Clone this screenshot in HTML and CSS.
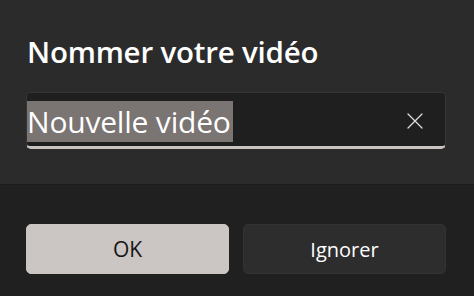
FILE: index.html
```html
<!DOCTYPE html>
<html lang="fr">

<head>
   <meta charset="UTF-8">
   <meta name="viewport" content="width=device-width, initial-scale=1.0">
   <title>Nommer votre vidéo</title>
   <link rel="stylesheet" href="styles.css">
</head>

<body>
   <div class="dialog">
      <div class="dialog-content">
         <h1 class="dialog-title">Nommer votre vidéo</h1>
         <div class="name-field">
            <span class="name-text"><span class="selected">Nouvelle vidéo</span></span>
            <button class="clear-button" aria-label="Effacer">
               <svg xmlns="http://www.w3.org/2000/svg" width="16" height="16" viewBox="0 0 16 16" fill="none" stroke="currentColor" stroke-width="1.3" stroke-linecap="round">
                  <path d="M1 1l14 14M15 1L1 15"/>
               </svg>
            </button>
         </div>
      </div>
      <div class="dialog-footer">
         <button class="dialog-button primary">OK</button>
         <button class="dialog-button">Ignorer</button>
      </div>
   </div>
</body>

</html>
```

FILE: styles.css
```css
body {
   margin: 0;
   background-color: #202020;
   font-family: "Open Sans", "Noto Sans", sans-serif;
   color: #ffffff;
}

.dialog {
   width: 474px;
   height: 296px;
   overflow: hidden;
}

.dialog-content {
   height: 185px;
   box-sizing: border-box;
   padding: 32px 28px 0 26px;
   background-color: #2b2b2b;
   border-bottom: 1px solid #1c1c1c;
}

.dialog-title {
   margin: 0 0 0 1px;
   font-size: 29.5px;
   font-weight: 600;
   line-height: 40px;
   letter-spacing: -0.2px;
}

.name-field {
   display: flex;
   align-items: center;
   height: 57px;
   margin-top: 20px;
   box-sizing: border-box;
   padding: 7px 22px 4px 0;
   background-color: #1f1f1f;
   border: 1px solid #353535;
   border-bottom: 3px solid #c9c4c2;
   border-radius: 5px;
}

.name-text {
   flex: 1;
   font-size: 30px;
   line-height: 41px;
}

.selected {
   display: inline-block;
   padding-right: 2px;
   background-color: #7a7473;
   letter-spacing: -0.2px;
}

.clear-button {
   display: flex;
   padding: 0;
   background: none;
   border: none;
   color: #dcdcdc;
}

.dialog-footer {
   display: grid;
   grid-template-columns: 1fr 1fr;
   gap: 14px;
   padding: 39px 28px 0 26px;
}

.dialog-button {
   height: 50px;
   font-family: "Open Sans", "Noto Sans", sans-serif;
   font-size: 20px;
   color: #ffffff;
   background-color: #2d2d2d;
   border: 1px solid #333333;
   border-radius: 5px;
}

.dialog-button.primary {
   font-size: 21px;
   color: #151515;
   background-color: #cbc5c3;
   border-color: #cbc5c3;
}
```
